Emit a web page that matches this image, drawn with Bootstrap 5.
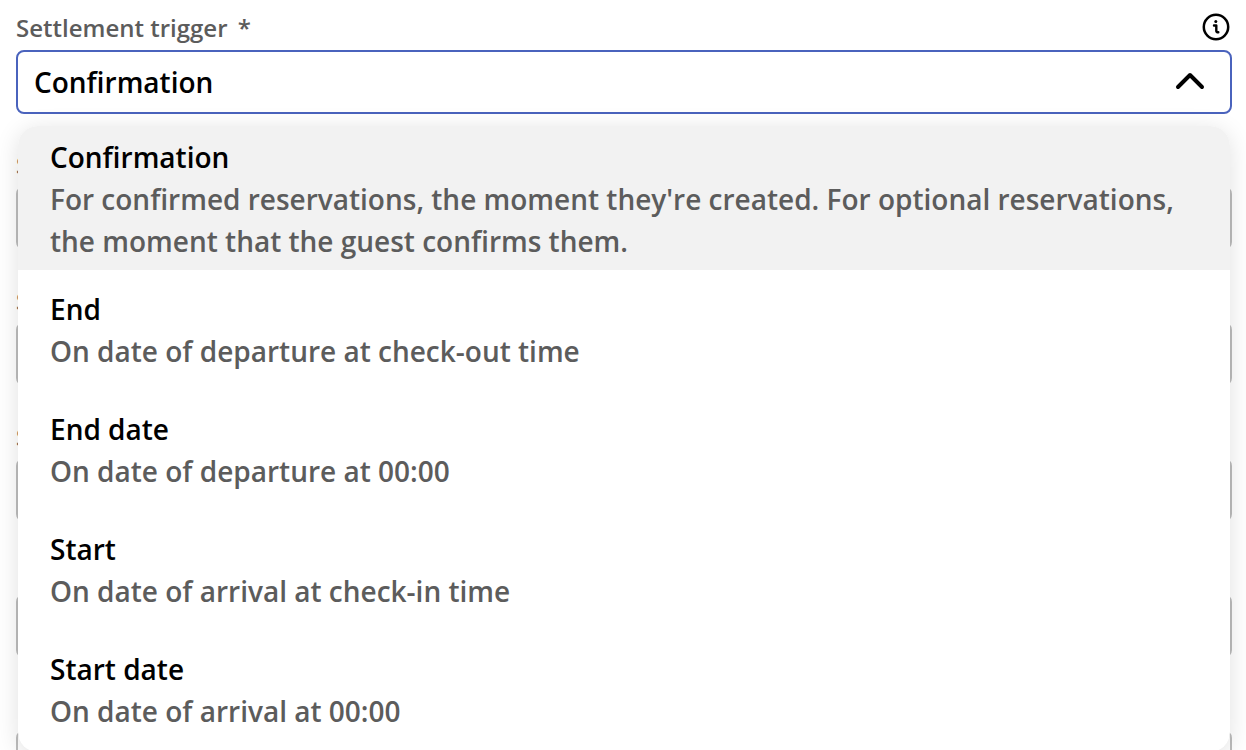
<!DOCTYPE html>
<html lang="en">
<head>
<meta charset="utf-8">
<meta name="viewport" content="width=device-width, initial-scale=1">
<title>Settlement trigger</title>
<link href="https://cdn.jsdelivr.net/npm/bootstrap@5.3.0/dist/css/bootstrap.min.css" rel="stylesheet">
<style>
  body { font-family: "Open Sans", "Noto Sans", sans-serif; font-weight: 600; font-size: 28px; line-height: 42px; color: #000; background: #fff; }
  .settings { padding: 6px 14px 0 16px; height: 100vh; overflow: hidden; }
  .field-head { height: 44px; }
  .field-label { font-size: 24px; line-height: 44px; color: #5c5c5c; }
  .field-box { height: 64px; border: 2px solid #bdbdbd; border-radius: 8px; background: #fff; color: #000; font: inherit; padding: 0 24px 0 16px; }
  .field-box.is-open { border-color: #4a63bd; }
  .field-gap { margin-bottom: 28px; }
  .info-btn { line-height: 0; margin: 0 2px 2px 0; color: #000; }
  .option-menu { top: 76px; left: 2px; right: 2px; z-index: 10; padding-bottom: 2px; background: #fff; border-radius: 20px; box-shadow: 0 4px 24px rgba(0, 0, 0, .12); }
  .option { min-height: 120px; padding: 8px 32px; border: 0; background: none; font: inherit; color: #000; text-align: left; }
  .option.selected { padding-top: 10px; background: #f2f2f2; border-radius: 20px 20px 0 0; }
  .option-note { color: #5c5c5c; }
</style>
</head>
<body>
<main class="settings">
  <div class="field-gap">
    <div class="field-head d-flex justify-content-between align-items-center">
      <label class="field-label" for="trigger">Settlement trigger <span class="ms-1">*</span></label>
      <button type="button" class="btn info-btn p-0 border-0" aria-label="More information">
        <svg width="28" height="28" viewBox="0 0 28 28" fill="none" stroke="currentColor" stroke-linecap="round" stroke-linejoin="round" aria-hidden="true">
          <circle cx="14" cy="14" r="12.2" stroke-width="2.5"/>
          <circle cx="13.8" cy="8.4" r="1.5" fill="currentColor" stroke="none"/>
          <path d="M12 12.5h2.3v5.2q0 1.6 2 1.6" stroke-width="2.4"/>
        </svg>
      </button>
    </div>
    <div class="position-relative">
      <button type="button" id="trigger" class="field-box is-open w-100 d-flex justify-content-between align-items-center" aria-haspopup="listbox" aria-expanded="true">
        <span>Confirmation</span>
        <svg width="32" height="24" viewBox="0 0 32 24" fill="none" stroke="currentColor" stroke-width="4" stroke-linecap="round" stroke-linejoin="round" aria-hidden="true"><path d="M4 17 16 5 28 17"/></svg>
      </button>
      <div class="option-menu position-absolute d-flex flex-column" role="listbox" aria-label="Settlement trigger">
        <button type="button" class="option selected d-flex flex-column justify-content-center" role="option" aria-selected="true">
          <span>Confirmation</span>
          <span class="option-note">For confirmed reservations, the moment they're created. For optional reservations, the moment that the guest confirms them.</span>
        </button>
        <button type="button" class="option d-flex flex-column justify-content-center" role="option" aria-selected="false">
          <span>End</span>
          <span class="option-note">On date of departure at check-out time</span>
        </button>
        <button type="button" class="option d-flex flex-column justify-content-center" role="option" aria-selected="false">
          <span>End date</span>
          <span class="option-note">On date of departure at 00:00</span>
        </button>
        <button type="button" class="option d-flex flex-column justify-content-center" role="option" aria-selected="false">
          <span>Start</span>
          <span class="option-note">On date of arrival at check-in time</span>
        </button>
        <button type="button" class="option d-flex flex-column justify-content-center" role="option" aria-selected="false">
          <span>Start date</span>
          <span class="option-note">On date of arrival at 00:00</span>
        </button>
      </div>
    </div>
  </div>
  <div class="field-gap">
    <div class="field-head"><label class="field-label" for="f2">S</label></div>
    <input id="f2" type="text" class="field-box w-100 d-block">
  </div>
  <div class="field-gap">
    <div class="field-head"><label class="field-label" for="f3">S</label></div>
    <input id="f3" type="text" class="field-box w-100 d-block">
  </div>
  <div class="field-gap">
    <div class="field-head"><label class="field-label" for="f4">S</label></div>
    <input id="f4" type="text" class="field-box w-100 d-block">
  </div>
  <div class="field-gap">
    <div class="field-head"></div>
    <input type="text" class="field-box w-100 d-block" aria-label="Value">
  </div>
  <div class="field-gap">
    <div class="field-head"></div>
    <input type="text" class="field-box w-100 d-block" aria-label="Value">
  </div>
</main>
<script src="https://cdn.jsdelivr.net/npm/bootstrap@5.3.0/dist/js/bootstrap.bundle.min.js"></script>
</body>
</html>
